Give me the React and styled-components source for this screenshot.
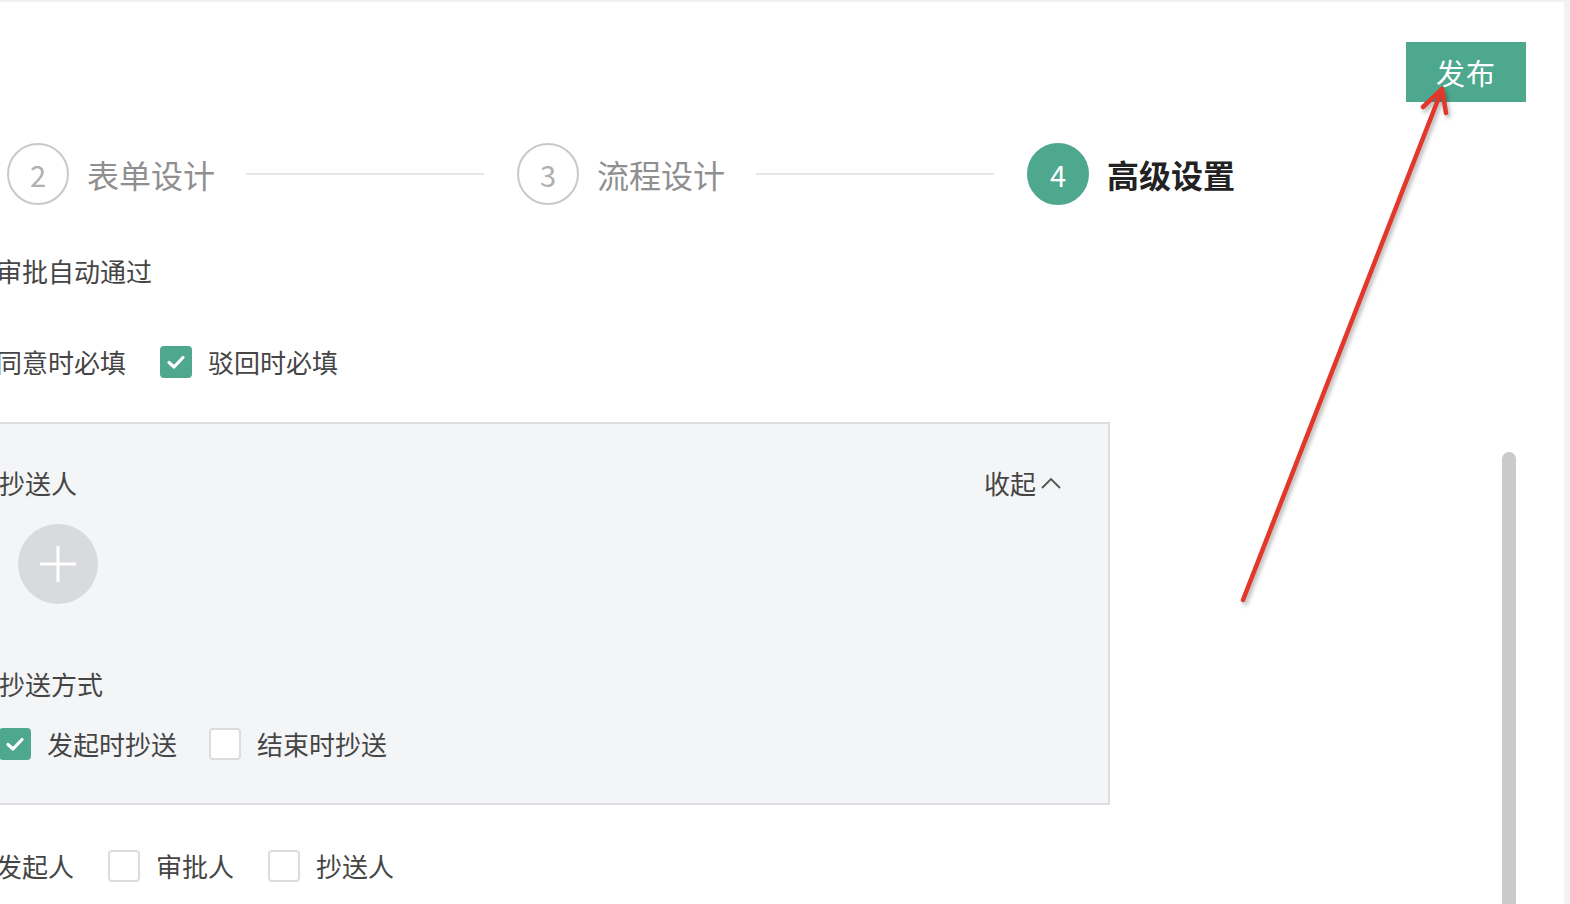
import React from "react";
import styled, { createGlobalStyle } from "styled-components";

const GREEN = "#4ea88d";

const GlobalStyle = createGlobalStyle`
  html, body {
    margin: 0;
    padding: 0;
    background: #fff;
    overflow: hidden;
  }
  body {
    font-family: "Noto Sans CJK SC", "Noto Sans", sans-serif;
  }
`;

const Page = styled.div`
  position: relative;
  width: 1570px;
  height: 904px;
  box-sizing: border-box;
  border-top: 2px solid #eef0f2;
  border-right: 6px solid #f2f3f5;
  overflow: hidden;
  background: #fff;
`;

const Header = styled.div`
  display: flex;
  justify-content: flex-end;
  padding: 40px 38px 0 0;
`;

const PublishButton = styled.button`
  width: 120px;
  height: 60px;
  border: none;
  border-radius: 0;
  background: ${GREEN};
  color: #fff;
  font-family: inherit;
  font-size: 29px;
  letter-spacing: 1px;
  cursor: pointer;
`;

const Steps = styled.div`
  display: flex;
  align-items: center;
  margin: 41px 0 0 7px;
  height: 62px;
`;

const StepCircle = styled.div`
  width: 62px;
  height: 62px;
  box-sizing: border-box;
  border-radius: 50%;
  border: 2px solid ${(p) => (p.$active ? GREEN : "#c9c9c9")};
  background: ${(p) => (p.$active ? GREEN : "#fff")};
  color: ${(p) => (p.$active ? "#fff" : "#b0b0b0")};
  display: flex;
  align-items: center;
  justify-content: center;
  font-size: 29px;
  flex-shrink: 0;
`;

const StepTitle = styled.div`
  margin-left: 18px;
  font-size: 32px;
  line-height: 40px;
  white-space: nowrap;
  color: ${(p) => (p.$active ? "#222" : "#8f8f8f")};
  font-weight: ${(p) => (p.$active ? 700 : 400)};
`;

const StepLine = styled.div`
  width: 238px;
  height: 2px;
  background: #e6e6e6;
  margin: 0 33px 0 31px;
  flex-shrink: 0;
`;

const Label = styled.div`
  font-size: 26px;
  line-height: 36px;
  color: #454545;
  white-space: nowrap;
  margin-left: ${(p) => p.$offset || 0}px;
`;

const Section = styled.div`
  margin-top: ${(p) => p.$top}px;
`;

const CheckGroup = styled.div`
  display: flex;
  align-items: center;
  gap: ${(p) => p.$gap || 32}px;
  height: 36px;
  margin-left: ${(p) => p.$offset || 0}px;
`;

const CheckItem = styled.label`
  display: flex;
  align-items: center;
  gap: 16px;
  font-size: 26px;
  line-height: 36px;
  color: #454545;
  white-space: nowrap;
`;

const Box = styled.span`
  width: 32px;
  height: 32px;
  box-sizing: border-box;
  border-radius: 4px;
  flex-shrink: 0;
  display: flex;
  align-items: center;
  justify-content: center;
  background: ${(p) => (p.$checked ? GREEN : "#fff")};
  border: 2px solid ${(p) => (p.$checked ? GREEN : "#dcdcdc")};
`;

const Panel = styled.div`
  margin: 42px 0 0 -40px;
  width: 1150px;
  box-sizing: border-box;
  background: #f4f5f7;
  border: 2px solid #dcdee1;
  padding: 41px 46px 41px 37px;
`;

const PanelHead = styled.div`
  display: flex;
  justify-content: space-between;
  align-items: center;
`;

const Collapse = styled.div`
  display: flex;
  align-items: center;
  gap: 4px;
  font-size: 26px;
  line-height: 36px;
  color: #454545;
`;

const AddButton = styled.div`
  width: 80px;
  height: 80px;
  border-radius: 50%;
  background: #d9dadc;
  margin: 23px 0 0 19px;
  display: flex;
  align-items: center;
  justify-content: center;
`;

const Scrollbar = styled.div`
  position: absolute;
  left: 1502px;
  top: 450px;
  width: 14px;
  height: 520px;
  border-radius: 7px;
  background: #c9cacc;
`;

const Overlay = styled.svg`
  position: absolute;
  left: 0;
  top: 0;
  width: 1570px;
  height: 904px;
  pointer-events: none;
  filter: drop-shadow(2px 3px 2px rgba(0, 0, 0, 0.3));
`;

function Check({ checked }) {
  return (
    <Box $checked={checked}>
      {checked && (
        <svg width="20" height="16" viewBox="0 0 20 16">
          <path
            d="M3 8.5 L8 13 L17 3.5"
            fill="none"
            stroke="#fff"
            strokeWidth="3.2"
            strokeLinecap="round"
            strokeLinejoin="round"
          />
        </svg>
      )}
    </Box>
  );
}

const steps = [
  { n: 2, title: "表单设计" },
  { n: 3, title: "流程设计" },
  { n: 4, title: "高级设置", active: true },
];

export default function App() {
  return (
    <>
      <GlobalStyle />
      <Page>
        <Header>
          <PublishButton>发布</PublishButton>
        </Header>

        <Steps>
          {steps.map((s, i) => (
            <React.Fragment key={s.n}>
              <StepCircle $active={s.active}>{s.n}</StepCircle>
              <StepTitle $active={s.active}>{s.title}</StepTitle>
              {i < steps.length - 1 && <StepLine />}
            </React.Fragment>
          ))}
        </Steps>

        <Section $top={48}>
          <Label $offset={-4}>审批自动通过</Label>
        </Section>

        <Section $top={55}>
          <CheckGroup $offset={-52} $gap={34}>
            <CheckItem>
              <Check />
              同意时必填
            </CheckItem>
            <CheckItem>
              <Check checked />
              驳回时必填
            </CheckItem>
          </CheckGroup>
        </Section>

        <Panel>
          <PanelHead>
            <Label>抄送人</Label>
            <Collapse>
              收起
              <svg width="22" height="14" viewBox="0 0 22 14">
                <polyline
                  points="2,12 11,3 20,12"
                  fill="none"
                  stroke="#555"
                  strokeWidth="1.8"
                />
              </svg>
            </Collapse>
          </PanelHead>
          <AddButton>
            <svg width="36" height="36" viewBox="0 0 36 36">
              <path
                d="M18 1 V35 M1 18 H35"
                stroke="#fff"
                strokeWidth="3"
                strokeLinecap="round"
              />
            </svg>
          </AddButton>
          <Section $top={62}>
            <Label>抄送方式</Label>
          </Section>
          <Section $top={24}>
            <CheckGroup>
              <CheckItem>
                <Check checked />
                发起时抄送
              </CheckItem>
              <CheckItem>
                <Check />
                结束时抄送
              </CheckItem>
            </CheckGroup>
          </Section>
        </Panel>

        <Section $top={43}>
          <CheckGroup $offset={-52} $gap={34}>
            <CheckItem>
              <Check />
              发起人
            </CheckItem>
            <CheckItem>
              <Check />
              审批人
            </CheckItem>
            <CheckItem>
              <Check />
              抄送人
            </CheckItem>
          </CheckGroup>
        </Section>

        <Scrollbar />

        <Overlay viewBox="0 0 1570 904">
          <g
            fill="none"
            stroke="#e4372b"
            strokeWidth="4.5"
            strokeLinecap="round"
            strokeLinejoin="round"
          >
            <line x1="1243" y1="598" x2="1441" y2="90" />
            <polyline points="1423,105 1442,87 1446,111" />
          </g>
        </Overlay>
      </Page>
    </>
  );
}
